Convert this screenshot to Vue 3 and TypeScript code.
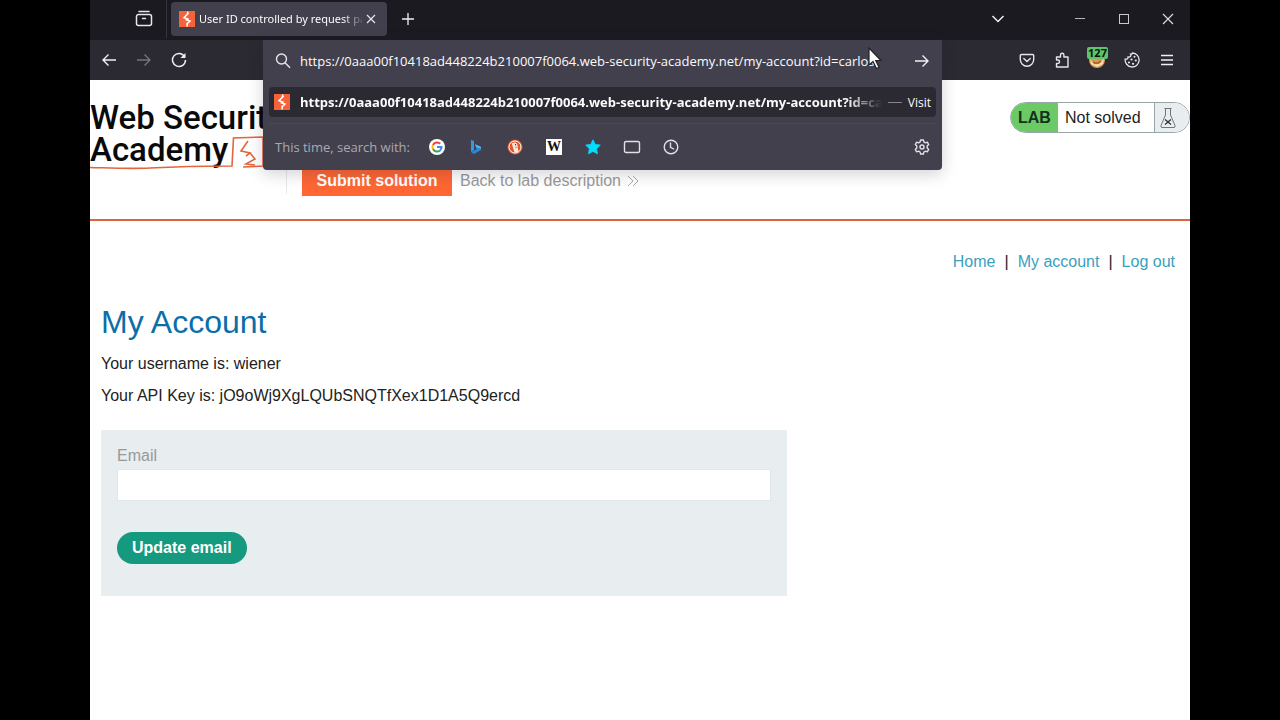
<script setup lang="ts">
import { ref } from 'vue'

const address = ref('https://0aaa00f10418ad448224b210007f0064.web-security-academy.net/my-account?id=carlos')
const email = ref('')
</script>

<template>
  <div class="desktop">
    <div class="browser">
      <div class="tabs">
        <button class="icon-btn view" aria-label="Firefox View">
          <svg width="18" height="18" viewBox="0 0 18 18" fill="none" stroke="#e6e6ea" stroke-width="1.5" stroke-linecap="round">
            <path d="M4 1.500h10M3.500 4.500h11a2 2 0 0 1 2 2v7a2 2 0 0 1-2 2h-11a2 2 0 0 1-2-2v-7a2 2 0 0 1 2-2z" />
            <path d="M7.500 8.500h3" />
          </svg>
        </button>
        <div class="tab">
          <svg class="favicon" width="16" height="16" viewBox="0 0 16 16">
            <rect width="16" height="16" fill="#f5633a" />
            <path d="M8.800 .5L8.300 4M9.600 2L5 6.600l4.800 1.800M6.500 8.500l4.500 1.500-3.500 3.200M8.400 11.500L8 15.500" fill="none" stroke="#fff" stroke-width="1.500" />
          </svg>
          <span class="tab-title">User ID controlled by request parameter</span>
          <button class="icon-btn" aria-label="Close tab">
            <svg width="10" height="10" viewBox="0 0 10 10" stroke="#e6e6ea" stroke-width="1.200"><path d="M1 1l8 8M9 1l-8 8" /></svg>
          </button>
        </div>
        <button class="icon-btn new-tab" aria-label="New tab">
          <svg width="12" height="12" viewBox="0 0 12 12" stroke="#f0f0f4" stroke-width="1.300"><path d="M6 0v12M0 6h12" /></svg>
        </button>
        <div class="window-controls">
          <button class="icon-btn" aria-label="List all tabs">
            <svg width="14" height="14" viewBox="0 0 14 14" fill="none" stroke="#f0f0f4" stroke-width="1.500"><path d="M1.500 4L7 9.500 12.500 4" /></svg>
          </button>
          <button class="icon-btn minimize" aria-label="Minimize">
            <svg width="12" height="12" viewBox="0 0 12 12" stroke="#b5b5ba"><path d="M1 5.500h10" /></svg>
          </button>
          <button class="icon-btn" aria-label="Maximize">
            <svg width="12" height="12" viewBox="0 0 12 12" fill="none" stroke="#c9c9ce"><rect x="1.500" y="1.500" width="9" height="9" /></svg>
          </button>
          <button class="icon-btn" aria-label="Close window">
            <svg width="12" height="12" viewBox="0 0 12 12" stroke="#d9d9de" stroke-width="1.200"><path d="M1 1l10 10M11 1L1 11" /></svg>
          </button>
        </div>
      </div>

      <div class="toolbar">
        <div class="history">
          <button class="icon-btn" aria-label="Back">
            <svg width="16" height="16" viewBox="0 0 16 16" fill="none" stroke="#f0f0f4" stroke-width="1.400"><path d="M15 8H2M7.500 2.500L2 8l5.500 5.500" /></svg>
          </button>
          <button class="icon-btn" aria-label="Forward">
            <svg width="16" height="16" viewBox="0 0 16 16" fill="none" stroke="#77767f" stroke-width="1.300"><path d="M1 8h13M8.500 2.500L14 8l-5.500 5.500" /></svg>
          </button>
          <button class="icon-btn" aria-label="Reload">
            <svg width="16" height="16" viewBox="0 0 16 16" fill="none" stroke="#f0f0f4" stroke-width="1.500"><path d="M13.500 4.500A6.500 6.500 0 1 0 14.500 8" /><path d="M14.500 1v5h-5z" fill="#f0f0f4" stroke="none" /></svg>
          </button>
        </div>

        <div class="address">
          <div class="popup">
            <div class="address-row">
              <svg width="16" height="16" viewBox="0 0 16 16" fill="none" stroke="#e6e6ea" stroke-width="1.400"><circle cx="6.500" cy="6" r="5" /><path d="M10 9.800l5 5" /></svg>
              <input v-model="address" class="address-input" type="text" aria-label="Address" spellcheck="false" />
              <button class="icon-btn" aria-label="Go">
                <svg width="16" height="16" viewBox="0 0 16 16" fill="none" stroke="#f0f0f4" stroke-width="1.400"><path d="M1 8h13M8.500 2.500L14 8l-5.500 5.500" /></svg>
              </button>
              <svg class="pointer" width="16" height="24" viewBox="0 0 16 24"><path d="M1 1v17l4-3.500 3.500 7 2.500-1.200-3.300-6.800H13z" fill="#fff" stroke="#222" stroke-width="1.200" /></svg>
            </div>
            <div class="result">
              <svg class="favicon" width="16" height="16" viewBox="0 0 16 16">
                <rect width="16" height="16" fill="#f5633a" />
                <path d="M8.800 .5L8.300 4M9.600 2L5 6.600l4.800 1.800M6.500 8.500l4.500 1.500-3.500 3.200M8.400 11.500L8 15.500" fill="none" stroke="#fff" stroke-width="1.500" />
              </svg>
              <span class="result-url">{{ address }}</span>
              <span class="dash"></span>
              <span class="result-action">Visit</span>
            </div>
            <div class="engines">
              <span class="engines-label">This time, search with:</span>
              <div class="engine-list">
                <button class="icon-btn" aria-label="Google">
                  <svg width="16" height="16" viewBox="0 0 16 16" fill="none" stroke-width="2">
                    <circle cx="8" cy="8" r="8" fill="#fff" stroke="none" />
                    <path d="M11.200 4.800A4.500 4.500 0 0 0 4 6" stroke="#ea4335" /><path d="M4 6a4.500 4.500 0 0 0 0 4" stroke="#fbbc05" />
                    <path d="M4 10a4.500 4.500 0 0 0 7 1.400" stroke="#34a853" /><path d="M11 11.400A4.500 4.500 0 0 0 12.500 8H8" stroke="#4285f4" />
                  </svg>
                </button>
                <button class="icon-btn" aria-label="Bing">
                  <svg width="16" height="16" viewBox="0 0 16 16">
                    <path d="M3 1l3 1v9l-3 2z" fill="#2f9be8" /><path d="M7 5.200l6 2.800v3l-7 4-3-2 5.500-2.500z" fill="#2b87d8" /><path d="M7 5.200l6 2.800v1.500L8.600 8.300z" fill="#4cc3ef" />
                  </svg>
                </button>
                <button class="icon-btn" aria-label="DuckDuckGo">
                  <svg width="16" height="16" viewBox="0 0 16 16">
                    <circle cx="8" cy="8" r="7.500" fill="#de5833" /><circle cx="8" cy="8" r="6" fill="none" stroke="#fff" />
                    <path d="M4.800 4.500c2-2 6-1 5.700 2l.5 3 .5 3.500-4 .5z" fill="#fbe9dc" /><path d="M8 7.500l3.500.3-1.500 1.500H8z" fill="#f3b51a" /><circle cx="8.500" cy="5.800" r=".7" fill="#333" />
                  </svg>
                </button>
                <button class="icon-btn wiki" aria-label="Wikipedia">W</button>
                <button class="icon-btn" aria-label="Bookmarks">
                  <svg width="16" height="16" viewBox="0 0 16 16"><path d="M8 .8l2.200 4.600 5.100.7-3.700 3.600.9 5.100L8 12.400l-4.500 2.400.9-5.100L.7 6.100l5.100-.7z" fill="#00ddff" stroke="#00ddff" stroke-width=".8" stroke-linejoin="round" /></svg>
                </button>
                <button class="icon-btn" aria-label="Tabs">
                  <svg width="18" height="16" viewBox="0 0 18 16" fill="none" stroke="#e0e0e6" stroke-width="1.400"><rect x="1.500" y="2.500" width="15" height="11" rx="1.500" /></svg>
                </button>
                <button class="icon-btn" aria-label="History">
                  <svg width="16" height="16" viewBox="0 0 16 16" fill="none" stroke="#e0e0e6" stroke-width="1.400" stroke-linecap="round"><circle cx="8" cy="8" r="6.800" /><path d="M7.500 4v4.300l3.200 1.700" /></svg>
                </button>
              </div>
              <button class="icon-btn settings" aria-label="Search settings">
                <svg width="16" height="16" viewBox="0 0 16 16" fill="none" stroke="#e0e0e6" stroke-width="1.400" stroke-linejoin="round">
                  <path d="M6.600 1h2.800l.5 2 1.400.8 2-.6 1.400 2.400-1.500 1.500v1.800l1.500 1.500-1.400 2.400-2-.6-1.400.8-.5 2H6.600l-.5-2-1.400-.8-2 .6-1.400-2.400 1.500-1.500V7.100L1.300 5.600l1.400-2.400 2 .6L6.100 3z" /><circle cx="8" cy="8" r="2" />
                </svg>
              </button>
            </div>
          </div>
        </div>

        <div class="extensions">
          <button class="icon-btn" aria-label="Pocket">
            <svg width="16" height="16" viewBox="0 0 16 16" fill="none" stroke="#e6e6ea" stroke-width="1.400" stroke-linecap="round"><path d="M2.500 2.500h11a1.200 1.200 0 0 1 1.200 1.200V7.500a6.700 6.700 0 0 1-13.400 0V3.700a1.200 1.200 0 0 1 1.200-1.200z" /><path d="M4.800 6.500L8 9.500l3.200-3" /></svg>
          </button>
          <button class="icon-btn" aria-label="Extensions">
            <svg width="16" height="16" viewBox="0 0 16 16" fill="none" stroke="#e6e6ea" stroke-width="1.400" stroke-linejoin="round"><path d="M2.500 15V11.500h1.300a1.700 1.700 0 0 0 0-3.500H2.500V5h4V3a1.700 1.700 0 0 1 3.400 0v2H14v10z" /></svg>
          </button>
          <button class="icon-btn blocker" aria-label="Blocked cookies">
            <svg width="18" height="18" viewBox="0 0 18 18"><circle cx="9" cy="9" r="8" fill="#d99a55" /><path d="M2 8c3 6 10 6 14-1l-1 6-6 3-6-3z" fill="#f6dfb4" /><path d="M5 11q4 3 8-1" stroke="#b8652b" stroke-width="2" fill="none" /></svg>
            <span class="badge">127</span>
          </button>
          <button class="icon-btn" aria-label="Cookie editor">
            <svg width="16" height="16" viewBox="0 0 16 16" fill="none" stroke="#e6e6ea" stroke-width="1.300"><path d="M8.500 1a7 7 0 1 1-7.300 6c2 .7 3-.5 2.800-2 2 .3 3.400-.8 2.600-2.800 1 .2 1.700-.3 1.900-1.200z" /><g fill="#e6e6ea" stroke="none"><circle cx="10.500" cy="4.800" r="1" /><circle cx="7.500" cy="7.500" r="1.100" /><circle cx="11.800" cy="8.500" r="1.100" /><circle cx="5" cy="10.500" r="1.100" /><circle cx="9" cy="11.800" r="1.100" /></g></svg>
          </button>
          <button class="icon-btn" aria-label="Menu">
            <svg width="14" height="14" viewBox="0 0 14 14" stroke="#f0f0f4" stroke-width="1.300"><path d="M1 2.500h12M1 7h12M1 11.500h12" /></svg>
          </button>
        </div>
      </div>

      <div class="page">
        <header class="lab-header">
          <div class="logo">
            <div>Web Security</div>
            <div class="logo-second">Academy
              <svg class="scribble" width="174" height="34" viewBox="0 0 174 34" fill="none" stroke="#e2663c" stroke-width="1.600">
                <path d="M0 31.500C20 32 42 33 60 32S110 30 142 30L143.500 2 173 1v29l-20 1" />
                <path d="M158 5l-7 10 9 2-4 3M160 17l5 6-9 5 9 1" />
              </svg>
            </div>
          </div>
          <div class="lab-actions">
            <button class="submit">Submit solution</button>
            <a class="back" href="#">Back to lab description
              <svg width="12" height="12" viewBox="0 0 12 12" fill="none" stroke="#aaa"><path d="M1 1l5 5-5 5M6 1l5 5-5 5" /></svg>
            </a>
          </div>
          <div class="status">
            <span class="status-tag">LAB</span>
            <span class="status-text">Not solved</span>
            <span class="status-icon">
              <svg width="16" height="22" viewBox="0 0 16 22" fill="none" stroke="#707575"><path d="M4.500 1.500h7M5.500 1.500V8L1 18.500Q.5 20.500 2 20.500h12q1.500 0 1-2L10.500 8V1.500" /><path d="M5 12.500l6 5M11 12.500l-6 5" stroke="#333" stroke-width="1.300" /></svg>
            </span>
          </div>
        </header>

        <nav class="links">
          <a href="#">Home</a><span>|</span><a href="#">My account</a><span>|</span><a href="#">Log out</a>
        </nav>

        <main class="account">
          <h1>My Account</h1>
          <p>Your username is: wiener</p>
          <p>Your API Key is: jO9oWj9XgLQUbSNQTfXex1D1A5Q9ercd</p>
          <form class="email-form" @submit.prevent>
            <label for="email">Email</label>
            <input id="email" v-model="email" type="email" />
            <button type="submit">Update email</button>
          </form>
        </main>
      </div>
    </div>
  </div>
</template>

<style>
body {
  margin: 0;
  background: #000;
}
</style>

<style scoped>
* {
  box-sizing: border-box;
}
button,
input {
  border: 0;
  margin: 0;
  padding: 0;
  background: none;
  font: inherit;
  color: inherit;
}
a {
  text-decoration: none;
}
svg {
  display: block;
  flex: none;
}
.desktop {
  min-height: 100vh;
  padding: 0 90px;
  display: flex;
  background: #000;
}
.browser {
  flex: 1;
  min-width: 0;
  display: flex;
  flex-direction: column;
  font-family: 'Open Sans', 'Noto Sans', sans-serif;
  font-size: 13px;
  color: #fbfbfe;
}
.icon-btn {
  display: flex;
  align-items: center;
  justify-content: center;
  flex: none;
}
.tabs {
  display: flex;
  align-items: center;
  height: 40px;
  padding-bottom: 2px;
  background: #1c1a21;
}
.view {
  width: 77px;
  height: 38px;
  padding-left: 31px;
  border-right: 1px solid #36343d;
}
.tab {
  display: flex;
  align-items: center;
  gap: 4px;
  width: 216px;
  height: 34px;
  margin-left: 4px;
  padding: 0 11px 0 8px;
  border-radius: 4px;
  background: #42404c;
}
.tab-title {
  flex: 1;
  min-width: 0;
  overflow: hidden;
  white-space: nowrap;
  font-family: 'Noto Sans', 'Open Sans', sans-serif;
  font-size: 11px;
  line-height: 20px;
  mask-image: linear-gradient(to right, #000 88%, transparent 102%);
}
.new-tab {
  width: 42px;
}
.window-controls {
  display: flex;
  align-items: center;
  margin-left: auto;
}
.window-controls .icon-btn {
  width: 44px;
  height: 36px;
}
.window-controls .minimize {
  margin-left: 38px;
}
.toolbar {
  display: grid;
  grid-template-columns: 173px 1fr 248px;
  height: 40px;
  background: #2b2931;
}
.history {
  display: flex;
  align-items: center;
  gap: 19px;
  padding-left: 11px;
}
.address {
  position: relative;
  min-width: 0;
}
.popup {
  position: absolute;
  z-index: 2;
  top: 0;
  left: 0;
  right: 0;
  padding: 1px 6px 0;
  border-radius: 0 0 4px 4px;
  background: #42404c;
  box-shadow: 0 4px 16px rgba(30, 25, 60, 0.2);
}
.address-row {
  position: relative;
  display: flex;
  align-items: center;
  gap: 9px;
  height: 40px;
  padding: 0 6px;
}
.address-input {
  flex: 1;
  min-width: 0;
  height: 32px;
  outline: 0;
  font-size: 13px;
}
.pointer {
  position: absolute;
  right: 52px;
  top: 6px;
}
.result {
  display: flex;
  align-items: center;
  gap: 6px;
  height: 30px;
  margin-top: 6px;
  padding: 0 5px;
  border-radius: 4px;
  background: #2b2931;
}
.result-url {
  flex: 1;
  min-width: 0;
  margin-left: 4px;
  overflow: hidden;
  white-space: nowrap;
  font-weight: 700;
  mask-image: linear-gradient(to right, #000 94%, transparent 100%);
}
.result-action {
  font-size: 12px;
}
.dash {
  width: 14px;
  height: 1px;
  background: #85838e;
}
.engines {
  display: flex;
  align-items: center;
  height: 47px;
  margin-top: 6px;
  padding: 0 6px;
  border-top: 1px solid #494753;
}
.engines-label {
  color: #aaa8b3;
  white-space: nowrap;
}
.engine-list {
  display: flex;
  margin-left: 8px;
}
.engine-list .icon-btn {
  width: 39px;
}
.engine-list .wiki {
  width: 16px;
  height: 16px;
  margin: 0 12px 0 11px;
  background: #fff;
  color: #111;
  font: 700 14px/16px 'Liberation Serif', serif;
}
.settings {
  margin-left: auto;
}
.extensions {
  display: flex;
  align-items: center;
  justify-content: flex-end;
  padding-right: 6px;
}
.extensions .icon-btn {
  width: 35px;
}
.blocker {
  position: relative;
}
.badge {
  position: absolute;
  top: -4px;
  left: 8px;
  width: 21px;
  border-radius: 2px;
  background: #5fc36b;
  color: #08180a;
  font-size: 11px;
  font-weight: 700;
  line-height: 12px;
  text-align: center;
}
.page {
  flex: 1;
  background: #fff;
  font-family: 'Liberation Sans', Arial, sans-serif;
  font-size: 16px;
  color: #222;
}
.lab-header {
  display: grid;
  grid-template-columns: 196px 1fr 180px;
  height: 141px;
  padding-top: 22px;
  border-bottom: 2px solid #da6440;
}
.logo {
  white-space: nowrap;
  color: #0a0a0a;
  font-family: 'Roboto', 'Liberation Sans', sans-serif;
  font-size: 33px;
  font-weight: 500;
  line-height: 32px;
}
.logo-second {
  position: relative;
}
.scribble {
  position: absolute;
  left: 0;
  top: 2px;
}
.lab-actions {
  display: flex;
  align-items: center;
  gap: 8px;
  height: 26px;
  margin-top: 66px;
  padding-left: 15px;
  border-left: 1px solid #e8e8ea;
}
.submit {
  width: 150px;
  height: 30px;
  background: #ff6633;
  color: #fff;
  font-weight: 700;
}
.back {
  display: flex;
  align-items: center;
  gap: 6px;
  color: #999;
}
.status {
  display: flex;
  height: 31px;
  overflow: hidden;
  border: 1px solid #9aa5a8;
  border-radius: 16px;
  line-height: 30px;
}
.status-tag {
  width: 47px;
  padding-left: 7px;
  background: #6cca66;
  color: #12331a;
  font-weight: 700;
}
.status-text {
  flex: 1;
  padding-left: 7px;
}
.status-icon {
  display: flex;
  align-items: center;
  width: 35px;
  padding-left: 5px;
  border-left: 1px solid #9aa5a8;
  background: #e8edef;
}
.links {
  display: flex;
  justify-content: flex-end;
  gap: 9px;
  padding: 31px 15px 0;
  line-height: 20px;
}
.links a {
  color: #3a9fc0;
}
.account {
  padding-top: 30px;
}
.account h1 {
  margin: 0 11px;
  color: #0b6ea8;
  font-size: 32px;
  font-weight: 400;
  line-height: 40px;
}
.account p {
  margin: 12px 11px 0;
  line-height: 20px;
}
.email-form {
  display: flex;
  flex-direction: column;
  align-items: flex-start;
  width: 62.4%;
  height: 166px;
  margin: 24px 11px 0;
  padding: 16px;
  background: #e8edef;
}
.email-form label {
  color: #999;
  line-height: 20px;
}
.email-form input {
  width: 100%;
  height: 32px;
  margin-top: 3px;
  padding: 0 8px;
  border: 1px solid #e2e8ea;
  background: #fff;
}
.email-form button {
  height: 32px;
  margin-top: 31px;
  padding: 0 15px;
  border-radius: 16px;
  background: #159a80;
  color: #fff;
  font-weight: 700;
}
</style>
